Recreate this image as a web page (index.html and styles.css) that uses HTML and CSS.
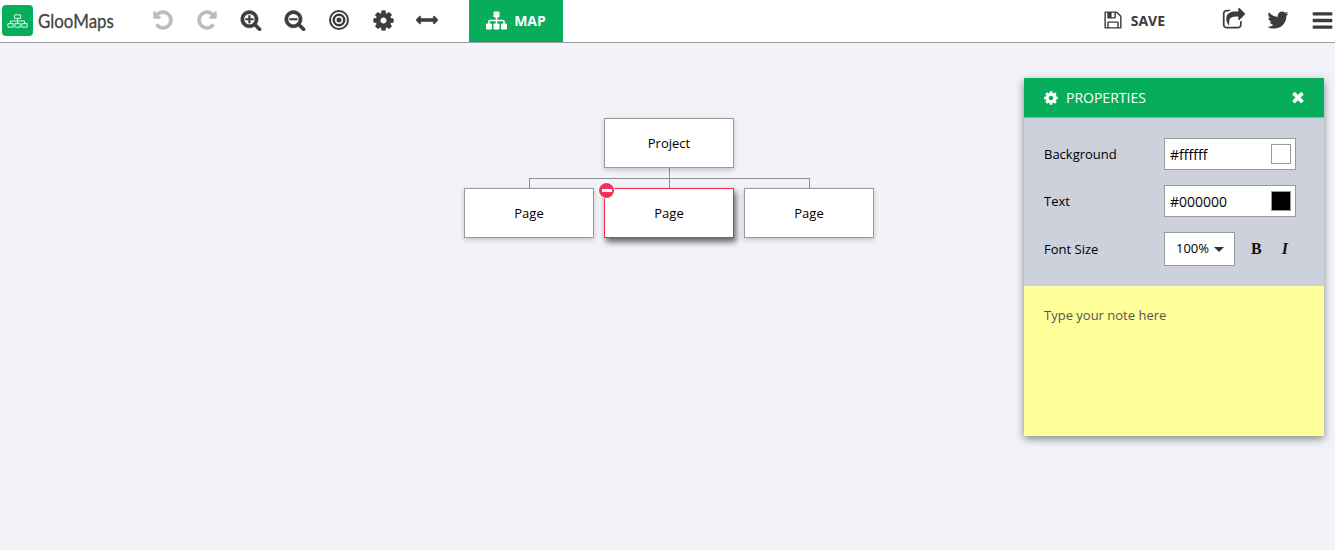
FILE: index.html
```html
<!DOCTYPE html>
<html lang="en">
<head>
<meta charset="utf-8">
<title>GlooMaps</title>
<link rel="stylesheet" href="styles.css">
</head>
<body>
<svg class="defs" aria-hidden="true">
  <symbol id="cog" viewBox="0 0 1792 1792"><path d="M1152 896q0-106-75-181t-181-75-181 75-75 181 75 181 181 75 181-75 75-181zm512-109v222q0 12-8 23t-20 13l-185 28q-19 54-39 91 35 50 107 138 10 12 10 25t-9 23q-27 37-99 108t-94 71q-12 0-26-9l-138-108q-44 23-91 38-16 136-29 186-7 28-36 28h-222q-14 0-24.500-8.500t-11.500-21.500l-28-184q-49-16-90-37l-141 107q-10 9-25 9-14 0-25-11-126-114-165-168-7-10-7-23 0-12 8-23 15-21 51-66.500t54-70.500q-27-50-41-99l-183-27q-13-2-21-12.500t-8-23.500v-222q0-12 8-23t19-13l186-28q14-46 39-92-40-57-107-138-10-12-10-24 0-10 9-23 26-36 98.500-107.500t94.500-71.500q13 0 26 10l138 107q44-23 91-38 16-136 29-186 7-28 36-28h222q14 0 24.500 8.500t11.500 21.500l28 184q49 16 90 37l142-107q9-9 24-9 13 0 25 10 129 119 165 170 7 8 7 22 0 12-8 23-15 21-51 66.500t-54 70.500q26 50 41 98l183 28q13 2 21 12.500t8 23.500z"/></symbol>
  <symbol id="times" viewBox="0 0 1792 1792"><path d="M1490 1322q0 40-28 68l-136 136q-28 28-68 28t-68-28l-294-294-294 294q-28 28-68 28t-68-28l-136-136q-28-28-28-68t28-68l294-294-294-294q-28-28-28-68t28-68l136-136q28-28 68-28t68 28l294 294 294-294q28-28 68-28t68 28l136 136q28 28 28 68t-28 68l-294 294 294 294q28 28 28 68z"/></symbol>
  <symbol id="bars" viewBox="0 0 1792 1792"><path d="M1664 1344v128q0 26-19 45t-45 19h-1408q-26 0-45-19t-19-45v-128q0-26 19-45t45-19h1408q26 0 45 19t19 45zm0-512v128q0 26-19 45t-45 19h-1408q-26 0-45-19t-19-45v-128q0-26 19-45t45-19h1408q26 0 45 19t19 45zm0-512v128q0 26-19 45t-45 19h-1408q-26 0-45-19t-19-45v-128q0-26 19-45t45-19h1408q26 0 45 19t19 45z"/></symbol>
  <symbol id="twitter" viewBox="0 0 1792 1792"><path d="M1684 408q-67 98-162 167 1 14 1 42 0 130-38 259.500t-115.500 248.500-184.500 210.500-258 146-323 54.500q-271 0-496-145 35 4 76 4 225 0 401-138-105-2-188-64.500t-114-159.500q33 5 61 5 43 0 85-11-112-23-185.500-111.500t-73.500-205.500v-4q68 38 146 41-66-44-105-115t-39-154q0-88 44-163 121 149 294.500 238.500t371.500 99.500q-8-38-8-74 0-134 94.500-228.500t228.500-94.500q140 0 236 102 109-21 200-76-35 109-138 171 89-10 178-48z"/></symbol>
  <symbol id="undo" viewBox="0 0 1792 1792"><path d="M1664 896q0 156-61 298t-164 245-245 164-298 61q-172 0-327-72.500t-264-204.500q-7-10-6.500-22.500t8.500-20.500l137-138q10-9 25-9 16 2 23 12 73 95 179 147t225 52q104 0 198.500-40.500t163.500-109.500 109.500-163.500 40.500-198.500-40.500-198.500-109.500-163.500-163.500-109.500-198.500-40.500q-98 0-188 35.500t-160 101.500l137 138q31 30 14 69-17 40-59 40h-448q-26 0-45-19t-19-45v-448q0-42 40-59 39-17 69 14l130 129q107-101 244.500-156.500t284.500-55.500q156 0 298 61t245 164 164 245 61 298z"/></symbol>
  <symbol id="redo" viewBox="0 0 1792 1792"><path transform="matrix(-1 0 0 1 1792 0)" d="M1664 896q0 156-61 298t-164 245-245 164-298 61q-172 0-327-72.500t-264-204.500q-7-10-6.500-22.500t8.500-20.500l137-138q10-9 25-9 16 2 23 12 73 95 179 147t225 52q104 0 198.500-40.500t163.500-109.500 109.500-163.500 40.500-198.500-40.500-198.500-109.500-163.500-163.500-109.500-198.500-40.500q-98 0-188 35.500t-160 101.500l137 138q31 30 14 69-17 40-59 40h-448q-26 0-45-19t-19-45v-448q0-42 40-59 39-17 69 14l130 129q107-101 244.500-156.500t284.500-55.500q156 0 298 61t245 164 164 245 61 298z"/></symbol>
  <symbol id="zoomin" viewBox="0 0 1792 1792"><path d="M1088 800v64q0 13-9.500 22.500t-22.500 9.500h-224v224q0 13-9.500 22.500t-22.500 9.500h-64q-13 0-22.500-9.500t-9.500-22.500v-224h-224q-13 0-22.500-9.500t-9.500-22.500v-64q0-13 9.500-22.500t22.500-9.500h224v-224q0-13 9.500-22.500t22.500-9.500h64q13 0 22.500 9.500t9.500 22.500v224h224q13 0 22.500 9.500t9.500 22.500zm128 32q0-185-131.500-316.500t-316.500-131.500-316.500 131.500-131.500 316.500 131.500 316.500 316.500 131.500 316.500-131.500 131.500-316.500zm512 832q0 53-37.500 90.500t-90.500 37.500q-54 0-90-38l-343-342q-179 124-399 124-143 0-273.500-55.500t-225-150-150-225-55.500-273.500 55.500-273.500 150-225 225-150 273.500-55.500 273.500 55.500 225 150 150 225 55.500 273.500q0 220-124 399l343 343q37 37 37 90z"/></symbol>
  <symbol id="zoomout" viewBox="0 0 1792 1792"><path d="M1088 800v64q0 13-9.500 22.500t-22.500 9.500h-576q-13 0-22.500-9.500t-9.500-22.500v-64q0-13 9.500-22.500t22.500-9.500h576q13 0 22.500 9.500t9.500 22.500zm128 32q0-185-131.500-316.500t-316.500-131.500-316.500 131.500-131.500 316.500 131.500 316.500 316.500 131.500 316.500-131.500 131.500-316.500zm512 832q0 53-37.500 90.500t-90.500 37.500q-54 0-90-38l-343-342q-179 124-399 124-143 0-273.500-55.500t-225-150-150-225-55.500-273.500 55.500-273.500 150-225 225-150 273.500-55.500 273.500 55.500 225 150 150 225 55.500 273.500q0 220-124 399l343 343q37 37 37 90z"/></symbol>
  <symbol id="save" viewBox="0 0 1792 1792"><path d="M512 1536h768v-384h-768v384zm896 0h128v-896q0-14-10-38.500t-20-34.500l-281-281q-10-10-34-20t-39-10v416q0 40-28 68t-68 28h-576q-40 0-68-28t-28-68v-416h-128v1280h128v-416q0-40 28-68t68-28h832q40 0 68 28t28 68v416zm-384-928v-320q0-13-9.500-22.500t-22.500-9.500h-192q-13 0-22.500 9.500t-9.500 22.500v320q0 13 9.500 22.500t22.500 9.500h192q13 0 22.500-9.500t9.500-22.500zm640 32v928q0 40-28 68t-68 28h-1344q-40 0-68-28t-28-68v-1344q0-40 28-68t68-28h928q40 0 88 20t76 48l280 280q28 28 48 76t20 88z"/></symbol>
  <symbol id="share" viewBox="0 0 1792 1792"><path d="M1472 989v259q0 119-84.500 203.500t-203.500 84.500h-832q-119 0-203.500-84.500t-84.500-203.500v-832q0-119 84.500-203.500t203.500-84.500h255q13 0 22.500 9.500t9.500 22.500q0 27-26 32-77 26-133 60-10 4-16 4h-112q-66 0-113 47t-47 113v832q0 66 47 113t113 47h832q66 0 113-47t47-113v-214q0-19 18-29 28-13 54-37 16-16 35-8 21 9 21 29zm237-496l-384 384q-18 19-45 19-12 0-25-5-39-17-39-59v-192h-160q-323 0-438 131-119 137-74 473 3 23-20 34-8 2-12 2-16 0-26-13-10-14-21-31t-39.500-68.500-49.500-99.500-38.500-114-17.500-122q0-49 3.500-91t14-90 28-88 47-81.500 68.500-74 94.500-61.500 124.500-48.500 159.500-30.500 196.500-11h160v-192q0-42 39-59 13-5 25-5 26 0 45 19l384 384q19 19 19 45t-19 45z"/></symbol>
  <symbol id="sitemap" viewBox="0 0 1792 1792"><path d="M1792 1248v320q0 40-28 68t-68 28h-320q-40 0-68-28t-28-68v-320q0-40 28-68t68-28h96v-192h-512v192h96q40 0 68 28t28 68v320q0 40-28 68t-68 28h-320q-40 0-68-28t-28-68v-320q0-40 28-68t68-28h96v-192h-512v192h96q40 0 68 28t28 68v320q0 40-28 68t-68 28h-320q-40 0-68-28t-28-68v-320q0-40 28-68t68-28h96v-192q0-52 38-90t90-38h512v-192h-96q-40 0-68-28t-28-68v-320q0-40 28-68t68-28h320q40 0 68 28t28 68v320q0 40-28 68t-68 28h-96v192h512q52 0 90 38t38 90v192h96q40 0 68 28t28 68z"/></symbol>
  <symbol id="arrows" viewBox="0 0 1792 1792"><path d="M1792 896q0 26-19 45l-256 256q-19 19-45 19t-45-19-19-45v-128h-1024v128q0 26-19 45t-45 19-45-19l-256-256q-19-19-19-45t19-45l256-256q19-19 45-19t45 19 19 45v128h1024v-128q0-26 19-45t45-19 45 19l256 256q19 19 19 45z"/></symbol>
</svg>

<header class="toolbar">
  <a class="brand">
    <span class="brand-mark">
      <svg class="brand-icon" viewBox="0 0 24 16"><path d="M8.500 1h7v4h-7zM1 11h6v4H1zM9 11h6v4H9zM17 11h6v4h-6zM12 5v3M4 11V8h16v3M12 8v3"/></svg>
    </span>
    <span class="brand-name">GlooMaps</span>
  </a>
  <nav class="tools">
    <button class="tool muted"><svg class="icon heavy i22"><use href="#undo"/></svg></button>
    <button class="tool muted"><svg class="icon heavy i22"><use href="#redo"/></svg></button>
    <button class="tool"><svg class="icon heavy i22"><use href="#zoomin"/></svg></button>
    <button class="tool"><svg class="icon heavy i22"><use href="#zoomout"/></svg></button>
    <button class="tool">
      <svg class="icon i20" viewBox="0 0 20 20"><path fill-rule="evenodd" d="M10 0a10 10 0 1 0 0 20a10 10 0 1 0 0-20zM10 2a8 8 0 1 1 0 16a8 8 0 1 1 0-16zM10 3.500a6.500 6.500 0 1 0 0 13a6.500 6.500 0 1 0 0-13zM10 6a4 4 0 1 1 0 8a4 4 0 1 1 0-8zM10 7.500a2.500 2.500 0 1 0 0 5a2.500 2.500 0 1 0 0-5z"/></svg>
    </button>
    <button class="tool"><svg class="icon heavy i23"><use href="#cog"/></svg></button>
    <button class="tool"><svg class="icon heavy i22"><use href="#arrows"/></svg></button>
  </nav>
  <button class="map-tab"><svg class="icon i21"><use href="#sitemap"/></svg><span>MAP</span></button>
  <button class="save"><svg class="icon i20"><use href="#save"/></svg><span>SAVE</span></button>
  <nav class="tools">
    <button class="tool"><svg class="icon i24"><use href="#share"/></svg></button>
    <button class="tool"><svg class="icon i24"><use href="#twitter"/></svg></button>
    <button class="tool tool-last"><svg class="icon i23"><use href="#bars"/></svg></button>
  </nav>
</header>

<main class="canvas">
  <svg class="links" width="1335" height="507" aria-hidden="true"><path d="M669.500 125v10M529.500 145v-9.500h280V145M669.500 135v10"/></svg>
  <div class="node node-root">Project</div>
  <div class="node node-a">Page</div>
  <div class="node node-b selected">Page
    <span class="remove"></span>
  </div>
  <div class="node node-c">Page</div>

  <aside class="panel">
    <div class="panel-head">
      <svg class="icon i16"><use href="#cog"/></svg>
      <span class="panel-title">PROPERTIES</span>
      <svg class="icon heavy i16 panel-close"><use href="#times"/></svg>
    </div>
    <div class="panel-form">
      <label class="row">
        <span class="row-label">Background</span>
        <span class="field"><span>#ffffff</span><span class="swatch swatch-white"></span></span>
      </label>
      <label class="row">
        <span class="row-label">Text</span>
        <span class="field"><span>#000000</span><span class="swatch swatch-black"></span></span>
      </label>
      <div class="row row-font">
        <span class="row-label">Font Size</span>
        <span class="select"><span>100%</span><span class="caret"></span></span>
        <span class="style-btn bold">B</span>
        <span class="style-btn italic">I</span>
      </div>
    </div>
    <div class="note">Type your note here</div>
  </aside>
</main>
</body>
</html>
```

FILE: styles.css
```css
* { box-sizing: border-box; }

html, body {
  margin: 0;
  height: 100%;
  overflow: hidden;
}

body {
  display: flex;
  flex-direction: column;
  font-family: "Open Sans", "Liberation Sans", sans-serif;
  font-size: 13px;
  color: #000;
  background: #f1f3f8;
}

.defs {
  position: absolute;
  width: 0;
  height: 0;
}

button {
  border: 0;
  background: none;
  padding: 0;
  font: inherit;
  color: inherit;
}

.icon { fill: currentColor; display: block; flex: none; }
.heavy { stroke: currentColor; stroke-width: 45; }
.i16 { width: 16px; height: 16px; }
.i20 { width: 20px; height: 20px; }
.i21 { width: 21px; height: 21px; }
.i22 { width: 22px; height: 22px; }
.i23 { width: 23px; height: 23px; }
.i24 { width: 24px; height: 24px; }

.toolbar {
  flex: none;
  height: 43px;
  display: flex;
  align-items: stretch;
  background: #fff;
  border-bottom: 1px solid #9b9ba3;
  color: #3c3c3c;
}

.brand {
  display: flex;
  align-items: center;
  width: 141px;
  padding: 0 0 1px 2px;
}

.brand-mark {
  width: 31px;
  height: 31px;
  border-radius: 4px;
  background: #06ad5b;
  display: flex;
  align-items: center;
  justify-content: center;
}

.brand-icon {
  width: 21px;
  height: 14px;
  fill: none;
  stroke: #fff;
  stroke-width: 1;
}

.brand-name {
  margin-left: 5px;
  font-family: "Lato", sans-serif;
  font-size: 19px;
  color: #444;
  -webkit-text-stroke: 0.3px #444;
  transform: scaleX(0.89);
  transform-origin: left center;
}

.tools { display: flex; }

.tool {
  width: 44px;
  padding-bottom: 2px;
  display: flex;
  align-items: center;
  justify-content: center;
}

.tool.muted { color: #bbb; }

.tool-last {
  margin-right: -9px;
}

.map-tab {
  width: 94px;
  height: 42px;
  margin-left: 20px;
  padding: 0 0 2px;
  background: #06ad5b;
  color: #fff;
  display: flex;
  align-items: center;
  justify-content: center;
  gap: 7px;
  font-weight: 700;
  font-size: 14px;
}

.save {
  margin-left: auto;
  margin-right: 47px;
  padding-bottom: 2px;
  display: flex;
  align-items: center;
  gap: 8px;
  font-weight: 700;
  font-size: 14px;
}

.canvas {
  flex: 1;
  position: relative;
}

.links {
  position: absolute;
  left: 0;
  top: 0;
  fill: none;
  stroke: #8f8f8f;
  stroke-width: 1;
  shape-rendering: crispEdges;
}

.node {
  position: absolute;
  width: 130px;
  height: 50px;
  display: flex;
  align-items: center;
  justify-content: center;
  background: #fff;
  border: 1px solid #999;
  box-shadow: 0 2px 5px rgba(0, 0, 0, 0.2);
}

.node-root { left: 604px; top: 75px; }
.node-a { left: 464px; top: 145px; }
.node-b { left: 604px; top: 145px; }
.node-c { left: 744px; top: 145px; }

.node.selected {
  border-color: #f5284f;
  box-shadow: 2px 4px 6px rgba(0, 0, 0, 0.6);
}

.remove {
  position: absolute;
  left: -6px;
  top: -6px;
  width: 15px;
  height: 15px;
  border-radius: 50%;
  background: #f5305a;
  box-shadow: 0 0 0 1px #fff;
  display: flex;
  align-items: center;
  justify-content: center;
}

.remove::before {
  content: "";
  width: 10px;
  height: 3px;
  background: #fff;
}

.panel {
  position: absolute;
  left: 1024px;
  top: 35px;
  width: 300px;
  box-shadow: 0 3px 8px rgba(0, 0, 0, 0.45);
}

.panel-head {
  height: 40px;
  background: #06ad5b;
  border-bottom: 1px solid #99aaa0;
  color: #fff;
  display: flex;
  align-items: center;
  padding: 0 18px 0 19px;
  font-size: 14px;
}

.panel-title { margin-left: 7px; flex: 1; }

.panel-close { margin-top: -2px; }

.panel-form {
  height: 168px;
  background: #cdd1dc;
  padding: 20px 28px 0 20px;
  display: flex;
  flex-direction: column;
}

.row {
  display: flex;
  align-items: center;
  height: 32px;
  margin-bottom: 15px;
}

.row-font { height: 34px; }

.row-label { width: 120px; flex: none; }

.field {
  width: 132px;
  height: 32px;
  background: #fff;
  border: 1px solid #999;
  display: flex;
  align-items: center;
  justify-content: space-between;
  padding: 0 4px 0 5px;
  font-size: 14px;
}

.swatch {
  width: 20px;
  height: 20px;
  border: 1px solid #999;
}
.swatch-white { background: #fff; }
.swatch-black { background: #000; }

.select {
  width: 71px;
  height: 34px;
  background: #fff;
  border: 1px solid #999;
  display: flex;
  align-items: center;
  padding: 0 0 2px 11px;
  font-size: 13px;
  gap: 5px;
}

.caret {
  width: 0;
  height: 0;
  margin-top: 3px;
  border-left: 5px solid transparent;
  border-right: 5px solid transparent;
  border-top: 5px solid #333;
}

.style-btn {
  font-family: "Liberation Serif", serif;
  font-size: 16px;
  font-weight: 700;
  color: #111;
}

.bold { margin-left: 16px; }
.italic { margin-left: 20px; font-style: italic; }

.note {
  height: 150px;
  background: #ffff99;
  padding: 20px;
  color: #555;
  line-height: 18px;
}
```
